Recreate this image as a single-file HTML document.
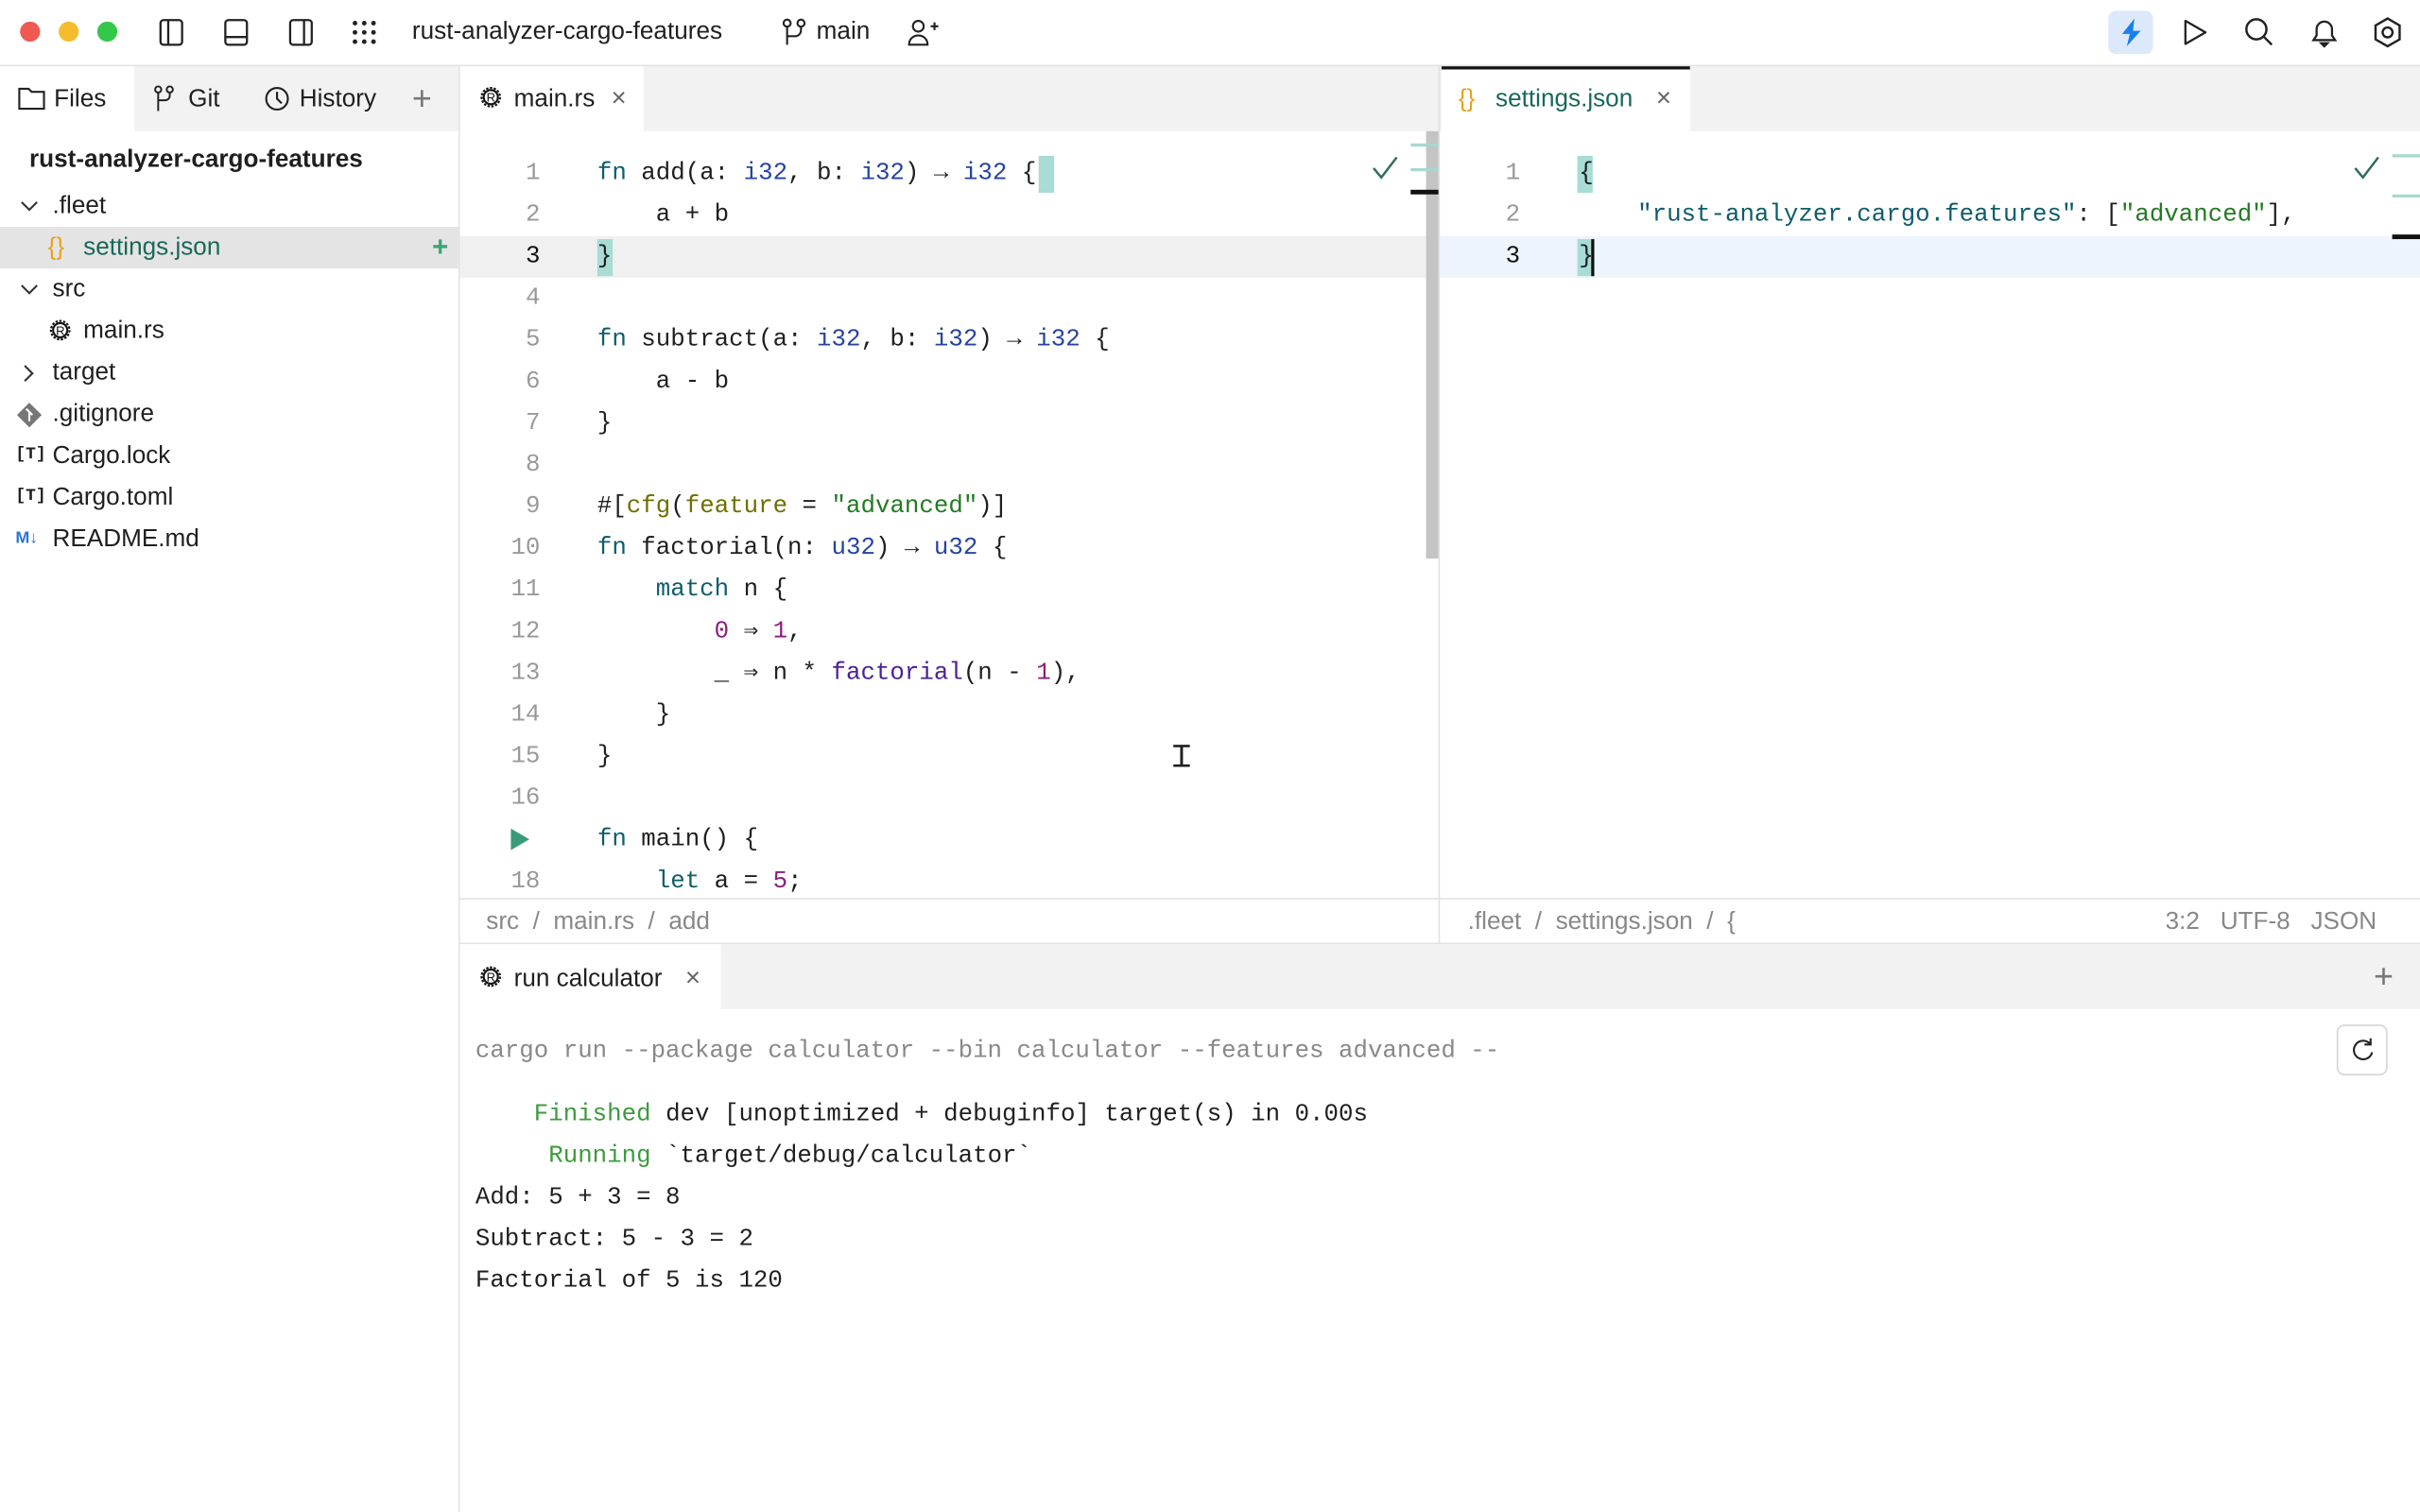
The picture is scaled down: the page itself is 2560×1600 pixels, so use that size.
<!DOCTYPE html>
<html><head><meta charset="utf-8"><style>
html,body{margin:0;padding:0;width:2560px;height:1600px;overflow:hidden;background:#fff}
#s{position:absolute;left:0;top:0;width:1568px;height:980px;transform:scale(1.63265);transform-origin:0 0;font-family:"Liberation Sans",sans-serif;color:#1f1f1f;font-size:16px}
.a{position:absolute}
.m{font-family:"Liberation Mono",monospace;font-size:15.8px;white-space:pre}
.ln{position:absolute;width:50px;text-align:right;color:#999;font-family:"Liberation Mono",monospace;font-size:15.8px}
.k{color:#0e5d6b}.t{color:#2544a0}.n{color:#8a1f7d}.s{color:#237a23}.at{color:#6f6f00}.f{color:#4b1f99}
.ar{display:inline-block;width:9.5px;text-align:center;overflow:visible}
.g{color:#888}
svg{position:absolute}
</style></head><body><div id="s">
<!-- title bar -->
<div class="a" style="left:0;top:0;width:1568px;height:42px;border-bottom:1px solid #e2e2e2;background:#fff"></div>
<div class="a" style="left:13px;top:14px;width:13px;height:13px;border-radius:50%;background:#ee5a52"></div>
<div class="a" style="left:38px;top:14px;width:13px;height:13px;border-radius:50%;background:#f5bd2e"></div>
<div class="a" style="left:63px;top:14px;width:13px;height:13px;border-radius:50%;background:#35c748"></div>
<svg style="left:102px;top:11px" width="20" height="20" fill="none" stroke="#222" stroke-width="1.4"><rect x="2" y="2" width="14" height="16" rx="2"/><line x1="7" y1="2" x2="7" y2="18"/></svg>
<svg style="left:144px;top:11px" width="20" height="20" fill="none" stroke="#222" stroke-width="1.4"><rect x="2" y="2" width="14" height="16" rx="2"/><line x1="2" y1="13" x2="16" y2="13"/></svg>
<svg style="left:186px;top:11px" width="20" height="20" fill="none" stroke="#222" stroke-width="1.4"><rect x="2" y="2" width="14" height="16" rx="2"/><line x1="11" y1="2" x2="11" y2="18"/></svg>
<svg style="left:227px;top:12px" width="18" height="18" fill="#222"><circle cx="3" cy="3" r="1.5"/><circle cx="9" cy="3" r="1.5"/><circle cx="15" cy="3" r="1.5"/><circle cx="3" cy="9" r="1.5"/><circle cx="9" cy="9" r="1.5"/><circle cx="15" cy="9" r="1.5"/><circle cx="3" cy="15" r="1.5"/><circle cx="9" cy="15" r="1.5"/><circle cx="15" cy="15" r="1.5"/></svg>
<div class="a" style="left:267px;top:12px;font-size:16px">rust-analyzer-cargo-features</div>
<svg style="left:506px;top:11px" width="18" height="20" fill="none" stroke="#222" stroke-width="1.3"><circle cx="4" cy="4" r="2.3"/><circle cx="13" cy="4" r="2.3"/><path d="M4 6.5V18M13 6.5v2a4 4 0 0 1-4 4H4"/></svg>
<div class="a" style="left:529px;top:12px">main</div>
<svg style="left:587px;top:11px" width="22" height="20" fill="none" stroke="#222" stroke-width="1.3"><circle cx="8" cy="6" r="3.5"/><path d="M2 18c0-4 3-6 6-6s6 2 6 6zM16 6h5M18.5 3.5v5"/></svg>
<div class="a" style="left:1366px;top:7px;width:29px;height:28px;border-radius:5px;background:#dbe9fb"></div>
<svg style="left:1371px;top:11px" width="20" height="20"><path d="M12 1L4 11h5l-2 8 9-10h-5z" fill="#1a7ff0"/></svg>
<svg style="left:1412px;top:11px" width="20" height="20" fill="none" stroke="#222" stroke-width="1.4"><path d="M4 2.5v15l13-7.5z" stroke-linejoin="round"/></svg>
<svg style="left:1453px;top:10px" width="22" height="22" fill="none" stroke="#222" stroke-width="1.5"><circle cx="9" cy="9" r="6.5"/><line x1="14" y1="14" x2="19" y2="19"/></svg>
<svg style="left:1495px;top:10px" width="22" height="22" fill="none" stroke="#222" stroke-width="1.4"><path d="M4 16h14l-2-3V9a5 5 0 0 0-10 0v4z"/><path d="M9 18h4l-2 2z" fill="#222"/></svg>
<svg style="left:1536px;top:10px" width="22" height="22" fill="none" stroke="#222" stroke-width="1.5"><path d="M11 2l7.8 4.5v9L11 20l-7.8-4.5v-9z"/><circle cx="11" cy="11" r="3.2"/></svg>

<!-- sidebar -->
<div class="a" style="left:0;top:43px;width:297px;height:42px;background:#f2f2f2"></div>
<div class="a" style="left:0;top:43px;width:87px;height:42px;background:#fff"></div>
<div class="a" style="left:297px;top:43px;width:1px;height:937px;background:#e2e2e2"></div>
<svg style="left:11px;top:55px" width="20" height="18" fill="none" stroke="#222" stroke-width="1.3"><path d="M1.5 2.5h6l2 2h8v11h-16z"/></svg>
<div class="a" style="left:35px;top:56px">Files</div>
<svg style="left:99px;top:55px" width="18" height="18" fill="none" stroke="#222" stroke-width="1.2"><circle cx="3.5" cy="3" r="2"/><circle cx="11" cy="3" r="2"/><path d="M3.5 5v12M11 5v2a3 3 0 0 1-3 3H3.5"/></svg>
<div class="a" style="left:122px;top:56px">Git</div>
<svg style="left:171px;top:55px" width="18" height="18" fill="none" stroke="#222" stroke-width="1.3"><circle cx="8.5" cy="9" r="7"/><path d="M8.5 4.5V9l3 3"/></svg>
<div class="a" style="left:194px;top:56px">History</div>
<div class="a" style="left:267px;top:51px;font-size:22px;color:#777;font-weight:300">+</div>
<div class="a" style="left:19px;top:95px;font-weight:bold">rust-analyzer-cargo-features</div>
<svg style="left:12px;top:127px" width="14" height="14" fill="none" stroke="#333" stroke-width="1.3"><path d="M2 4l5 5 5-5"/></svg>
<div class="a" style="left:34px;top:125px">.fleet</div>
<div class="a" style="left:0;top:147px;width:297px;height:27px;background:#e4e4e4"></div>
<div class="a" style="left:31px;top:152px;color:#e8a21c">{}</div>
<div class="a" style="left:54px;top:152px;color:#19685a">settings.json</div>
<div class="a" style="left:280px;top:150px;color:#3aa373;font-size:18px;font-weight:bold">+</div>
<svg style="left:12px;top:181px" width="14" height="14" fill="none" stroke="#333" stroke-width="1.3"><path d="M2 4l5 5 5-5"/></svg>
<div class="a" style="left:34px;top:179px">src</div>
<svg style="left:31px;top:206px" width="16" height="16" fill="none" stroke="#111" stroke-width="1.3"><circle cx="8" cy="8" r="6" stroke-dasharray="1.5 1"/><circle cx="8" cy="8" r="4.6"/><text x="5.2" y="11" font-size="8" fill="#111" stroke="none" font-family="Liberation Sans">R</text></svg>
<div class="a" style="left:54px;top:206px">main.rs</div>
<svg style="left:12px;top:235px" width="14" height="14" fill="none" stroke="#333" stroke-width="1.3"><path d="M4 2l5 5-5 5"/></svg>
<div class="a" style="left:34px;top:233px">target</div>
<svg style="left:10px;top:260px" width="18" height="18"><path d="M9 1l8 8-8 8-8-8z" fill="#777"/><path d="M7 5l4 4M9 7v6" stroke="#fff" stroke-width="1.3"/></svg>
<div class="a" style="left:34px;top:260px">.gitignore</div>
<div class="a" style="left:10px;top:289px;font-size:11px;font-weight:bold;font-family:'Liberation Mono',monospace">[T]</div>
<div class="a" style="left:34px;top:287px">Cargo.lock</div>
<div class="a" style="left:10px;top:316px;font-size:11px;font-weight:bold;font-family:'Liberation Mono',monospace">[T]</div>
<div class="a" style="left:34px;top:314px">Cargo.toml</div>
<div class="a" style="left:10px;top:343px;font-size:11px;font-weight:bold;color:#2f74d6">M↓</div>
<div class="a" style="left:34px;top:341px">README.md</div>

<!-- editor tab rows -->
<div class="a" style="left:298px;top:43px;width:1270px;height:42px;background:#f2f2f2"></div>
<div class="a" style="left:298px;top:43px;width:119px;height:42px;background:#fff"></div>
<svg style="left:310px;top:55px" width="16" height="16" fill="none" stroke="#111" stroke-width="1.3"><circle cx="8" cy="8" r="6" stroke-dasharray="1.5 1"/><circle cx="8" cy="8" r="4.6"/><text x="5.2" y="11" font-size="8" fill="#111" stroke="none" font-family="Liberation Sans">R</text></svg>
<div class="a" style="left:333px;top:56px">main.rs</div>
<div class="a" style="left:396px;top:54px;color:#666;font-size:17px">×</div>
<div class="a" style="left:932px;top:43px;width:1px;height:569px;background:#e2e2e2"></div>
<div class="a" style="left:934px;top:43px;width:161px;height:42px;background:#fff;border-top:2px solid #111;box-sizing:border-box"></div>
<div class="a" style="left:945px;top:56px;color:#e8a21c">{}</div>
<div class="a" style="left:969px;top:56px;color:#19685a">settings.json</div>
<div class="a" style="left:1073px;top:54px;color:#666;font-size:17px">×</div>

<!-- left code -->
<div class="a" style="left:298px;top:153px;width:626px;height:27px;background:#f0f0f0"></div>
<div class="a" style="left:924px;top:85px;width:8px;height:277px;background:#c4c4c4"></div>
<div class="a" style="left:914px;top:93px;width:18px;height:2px;background:#a8d8d0"></div>
<div class="a" style="left:914px;top:109px;width:18px;height:2px;background:#a8d8d0"></div>
<div class="a" style="left:914px;top:123px;width:18px;height:3px;background:#111"></div>
<svg style="left:888px;top:100px" width="20" height="18" fill="none" stroke="#2d6d5e" stroke-width="1.5"><path d="M2 9l5 6L17 2"/></svg>
<div class="a" style="left:673px;top:101px;width:10px;height:24px;background:#a8dcd4"></div>
<div class="a" style="left:387px;top:155px;width:10px;height:24px;background:#a8dcd4"></div>
<div class="ln" style="left:300px;top:103px">1</div><div class="ln" style="left:300px;top:130px">2</div><div class="ln" style="left:300px;top:157px;color:#111">3</div><div class="ln" style="left:300px;top:184px">4</div><div class="ln" style="left:300px;top:211px">5</div><div class="ln" style="left:300px;top:238px">6</div><div class="ln" style="left:300px;top:265px">7</div><div class="ln" style="left:300px;top:292px">8</div><div class="ln" style="left:300px;top:319px">9</div><div class="ln" style="left:300px;top:346px">10</div><div class="ln" style="left:300px;top:373px">11</div><div class="ln" style="left:300px;top:400px">12</div><div class="ln" style="left:300px;top:427px">13</div><div class="ln" style="left:300px;top:454px">14</div><div class="ln" style="left:300px;top:481px">15</div><div class="ln" style="left:300px;top:508px">16</div><div class="ln" style="left:300px;top:562px">18</div>
<svg style="left:330px;top:536px" width="14" height="16"><path d="M1 1v14l12-7z" fill="#3a9a7a"/></svg>
<div class="a m" style="left:387px;top:99px;line-height:27px"><span class="k">fn</span> add(a: <span class="t">i32</span>, b: <span class="t">i32</span>) <span class="ar">→</span> <span class="t">i32</span> {
    a + b
}

<span class="k">fn</span> subtract(a: <span class="t">i32</span>, b: <span class="t">i32</span>) <span class="ar">→</span> <span class="t">i32</span> {
    a - b
}

#[<span class="at">cfg</span>(<span class="at">feature</span> = <span class="s">"advanced"</span>)]
<span class="k">fn</span> factorial(n: <span class="t">u32</span>) <span class="ar">→</span> <span class="t">u32</span> {
    <span class="k">match</span> n {
        <span class="n">0</span> <span class="ar">⇒</span> <span class="n">1</span>,
        _ <span class="ar">⇒</span> n * <span class="f">factorial</span>(n - <span class="n">1</span>),
    }
}

<span class="k">fn</span> main() {
    <span class="k">let</span> a = <span class="n">5</span>;</div>
<div class="a" style="left:760px;top:476px;font-size:20px">Ɪ</div>

<!-- right code -->
<div class="a" style="left:933px;top:153px;width:635px;height:27px;background:#edf4fb"></div>
<div class="a" style="left:1022px;top:101px;width:10px;height:24px;background:#a8dcd4"></div>
<div class="a" style="left:1022px;top:155px;width:10px;height:24px;background:#a8dcd4"></div>
<div class="a" style="left:1031px;top:155px;width:1.5px;height:24px;background:#111"></div>
<div class="ln" style="left:935px;top:103px">1</div><div class="ln" style="left:935px;top:130px">2</div><div class="ln" style="left:935px;top:157px;color:#111">3</div>
<div class="a m" style="left:1023px;top:99px;line-height:27px">{
    <span class="k">"rust-analyzer.cargo.features"</span>: [<span class="s">"advanced"</span>],
}</div>
<svg style="left:1524px;top:100px" width="20" height="18" fill="none" stroke="#2d6d5e" stroke-width="1.5"><path d="M2 9l5 6L17 2"/></svg>
<div class="a" style="left:1550px;top:100px;width:18px;height:2px;background:#a8d8d0"></div>
<div class="a" style="left:1550px;top:126px;width:18px;height:2px;background:#a8d8d0"></div>
<div class="a" style="left:1550px;top:152px;width:18px;height:3px;background:#111"></div>

<!-- breadcrumb -->
<div class="a" style="left:298px;top:582px;width:1270px;height:1px;background:#e2e2e2"></div>
<div class="a g" style="left:315px;top:589px">src &nbsp;/ &nbsp;main.rs &nbsp;/ &nbsp;add</div>
<div class="a g" style="left:951px;top:589px">.fleet &nbsp;/ &nbsp;settings.json &nbsp;/ &nbsp;{</div>
<div class="a g" style="left:1403px;top:589px">3:2 &nbsp;&nbsp;UTF-8 &nbsp;&nbsp;JSON</div>
<div class="a" style="left:298px;top:611px;width:1270px;height:1px;background:#e2e2e2"></div>

<!-- bottom panel -->
<div class="a" style="left:298px;top:612px;width:1270px;height:42px;background:#f2f2f2"></div>
<div class="a" style="left:298px;top:612px;width:169px;height:42px;background:#fff"></div>
<svg style="left:310px;top:625px" width="16" height="16" fill="none" stroke="#111" stroke-width="1.3"><circle cx="8" cy="8" r="6" stroke-dasharray="1.5 1"/><circle cx="8" cy="8" r="4.6"/><text x="5.2" y="11" font-size="8" fill="#111" stroke="none" font-family="Liberation Sans">R</text></svg>
<div class="a" style="left:333px;top:626px">run calculator</div>
<div class="a" style="left:444px;top:624px;color:#666;font-size:17px">×</div>
<div class="a" style="left:1538px;top:620px;font-size:22px;color:#777;font-weight:300">+</div>
<div class="a" style="left:1514px;top:664px;width:33px;height:33px;border:1px solid #d6d6d6;border-radius:5px;box-sizing:border-box"></div>
<svg style="left:1521px;top:671px" width="20" height="20" fill="none" stroke="#222" stroke-width="1.3"><path d="M15 6a6 6 0 1 0 1 5"/><path d="M15 2v4h-4"/></svg>
<div class="a m" style="left:308px;top:672px;color:#888">cargo run --package calculator --bin calculator --features advanced --</div>
<div class="a m" style="left:308px;top:709px;line-height:27px">    <span style="color:#3d9a3d">Finished</span> dev [unoptimized + debuginfo] target(s) in 0.00s
     <span style="color:#3d9a3d">Running</span> `target/debug/calculator`
Add: 5 + 3 = 8
Subtract: 5 - 3 = 2
Factorial of 5 is 120</div>
</div></body></html>
